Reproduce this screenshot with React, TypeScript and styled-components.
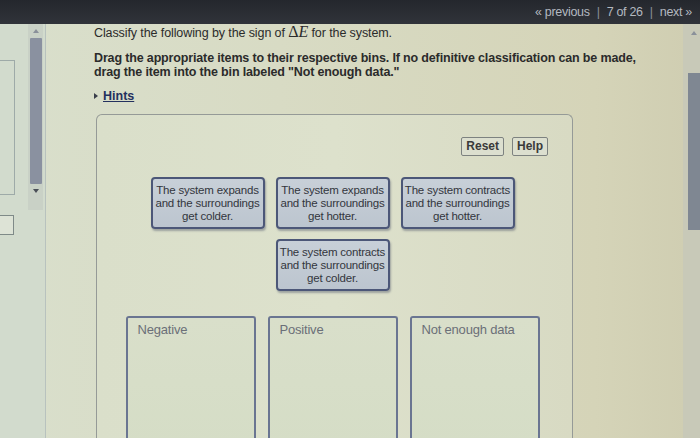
import React from 'react';
import styled, { createGlobalStyle } from 'styled-components';

const Global = createGlobalStyle`
  html, body {
    margin: 0;
    padding: 0;
    width: 700px;
    height: 438px;
    overflow: hidden;
    background: #d6d8bf;
    font-family: "Liberation Sans", Arial, sans-serif;
  }
`;

const Page = styled.div`
  width: 700px;
  height: 438px;
  display: flex;
  flex-direction: column;
  overflow: hidden;
`;

const TopBar = styled.div`
  height: 24px;
  flex: none;
  background: linear-gradient(#24272d, #30333a);
  display: flex;
  align-items: center;
  justify-content: flex-end;
  padding-right: 8px;
  color: #b4b9c0;
  font-size: 12.5px;
  letter-spacing: -0.3px;
`;

const Sep = styled.span`
  margin: 0 7px;
  color: #8a8f96;
`;

const Body = styled.div`
  flex: 1;
  display: grid;
  grid-template-columns: 46px 1fr 17px;
  min-height: 0;
  background: linear-gradient(90deg, #d9dfcc 0%, #d8dbc4 40%, #d5d4b8 85%, #cfcdb1 100%);
`;

const Sidebar = styled.div`
  display: flex;
  border-right: 1px solid #b8c2be;
  background: #d2dbcd;
`;

const SideBoxes = styled.div`
  width: 28px;
  display: flex;
  flex-direction: column;
  padding-top: 36px;
`;

const SideBox = styled.div`
  width: 15px;
  height: 135px;
  border: 1px solid #9eaaa8;
  border-left: none;
  box-sizing: border-box;
`;

const SideField = styled.div`
  margin-top: 20px;
  width: 14px;
  height: 20px;
  border: 1px solid #7f8a88;
  border-left: none;
  box-sizing: border-box;
  background: #dde3d6;
`;

const SideTrack = styled.div`
  width: 15px;
  display: flex;
  flex-direction: column;
  align-items: center;
  background: #c9d1c6;
  height: 186px;
  padding-top: 2px;
  box-sizing: border-box;
`;

const Arrow = styled.div<{ $down?: boolean }>`
  width: 0;
  height: 0;
  border-left: 3px solid transparent;
  border-right: 3px solid transparent;
  ${(p) => (p.$down ? 'border-top: 4px solid #4a4f58;' : 'border-bottom: 4px solid #8a909a;')}
  margin: 3px 0;
`;

const Thumb = styled.div<{ $h: number }>`
  width: 12px;
  height: ${(p) => p.$h}px;
  background: #8a91a0;
  border-radius: 1px;
  margin: 2px 0;
`;

const Content = styled.div`
  padding: 0 0 0 48px;
  color: #2b2b2b;
  min-width: 0;
`;

const Title = styled.p`
  margin: 0;
  font-size: 12.5px;
  line-height: 16px;
  letter-spacing: -0.1px;
`;

const Math = styled.span`
  font-family: "Liberation Serif", "Times New Roman", serif;
  font-size: 16px;
  i {
    font-style: italic;
  }
`;

const Instructions = styled.p`
  margin: 10px 0 0;
  font-size: 12.5px;
  font-weight: bold;
  line-height: 14px;
  letter-spacing: -0.15px;
`;

const Hints = styled.div`
  margin-top: 10px;
  display: flex;
  align-items: center;
  gap: 5px;
  font-size: 12.5px;
  font-weight: bold;
  color: #23305e;
  a {
    color: inherit;
    text-decoration: underline;
  }
`;

const Caret = styled.span`
  width: 0;
  height: 0;
  border-top: 3.5px solid transparent;
  border-bottom: 3.5px solid transparent;
  border-left: 4px solid #3a3f4a;
`;

const Panel = styled.div`
  margin-top: 11px;
  margin-left: 2px;
  width: 477px;
  height: 330px;
  box-sizing: border-box;
  border: 1px solid #959a97;
  border-bottom: none;
  border-radius: 6px 6px 0 0;
  background: linear-gradient(90deg, #dadfca, #dde1cc 50%, #d8dac3);
  padding: 22px 24px 0 28px;
`;

const Toolbar = styled.div`
  display: flex;
  justify-content: flex-end;
  gap: 8px;
`;

const Button = styled.button`
  font-family: "Liberation Sans", Arial, sans-serif;
  font-size: 12px;
  font-weight: bold;
  color: #3a3a3a;
  background: #dcdfcf;
  border: 1px solid #7d8280;
  border-radius: 2px;
  padding: 1px 4px;
  height: 19px;
  line-height: 15px;
`;

const Items = styled.div`
  margin-top: 21px;
  display: flex;
  flex-wrap: wrap;
  justify-content: center;
  gap: 10px 11px;
  width: 384px;
  margin-left: auto;
  margin-right: auto;
  position: relative;
  left: -4px;
`;

const Card = styled.div`
  width: 114px;
  height: 52px;
  box-sizing: border-box;
  border: 2px solid #4c5778;
  border-radius: 4px;
  background: linear-gradient(#c8d0d8, #bcc5cf);
  box-shadow: 1px 2px 2px rgba(40, 50, 80, 0.35);
  display: flex;
  align-items: center;
  justify-content: center;
  text-align: center;
  font-size: 11.5px;
  line-height: 13px;
  letter-spacing: -0.2px;
  color: #33363d;
  padding: 0 2px;
`;

const Bins = styled.div`
  margin-top: 25px;
  display: flex;
  justify-content: center;
  gap: 12px;
  position: relative;
  left: -4px;
`;

const Bin = styled.div`
  width: 130px;
  height: 130px;
  box-sizing: border-box;
  border: 2px solid #6a7591;
  border-bottom: none;
  border-radius: 3px 3px 0 0;
  background: linear-gradient(#d9dfca, #d5ddc6);
  padding: 4px 10px;
  font-size: 13px;
  color: #6b6f78;
  letter-spacing: -0.2px;
`;

const RightBar = styled.div`
  background: #c8c9b8;
  display: flex;
  flex-direction: column;
  align-items: flex-end;
  padding-top: 4px;
`;

const RightArrowBox = styled.div`
  width: 13px;
  display: flex;
  justify-content: center;
`;

const RightThumb = styled.div`
  width: 12px;
  height: 157px;
  margin-top: 35px;
  background: #7f8792;
`;

const items = [
  'The system expands and the surroundings get colder.',
  'The system expands and the surroundings get hotter.',
  'The system contracts and the surroundings get hotter.',
  'The system contracts and the surroundings get colder.',
];

const bins = ['Negative', 'Positive', 'Not enough data'];

export default function App() {
  return (
    <Page>
      <Global />
      <TopBar>
        <span>« previous</span>
        <Sep>|</Sep>
        <span>7 of 26</span>
        <Sep>|</Sep>
        <span>next »</span>
      </TopBar>
      <Body>
        <Sidebar>
          <SideBoxes>
            <SideBox />
            <SideField />
          </SideBoxes>
          <SideTrack>
            <Arrow />
            <Thumb $h={146} />
            <Arrow $down />
          </SideTrack>
        </Sidebar>
        <Content>
          <Title>
            Classify the following by the sign of{' '}
            <Math>
              Δ<i>E</i>
            </Math>{' '}
            for the system.
          </Title>
          <Instructions>
            Drag the appropriate items to their respective bins. If no definitive classification can be made,
            <br />
            drag the item into the bin labeled "Not enough data."
          </Instructions>
          <Hints>
            <Caret />
            <a>Hints</a>
          </Hints>
          <Panel>
            <Toolbar>
              <Button>Reset</Button>
              <Button>Help</Button>
            </Toolbar>
            <Items>
              {items.map((t) => (
                <Card key={t}>{t}</Card>
              ))}
            </Items>
            <Bins>
              {bins.map((b) => (
                <Bin key={b}>{b}</Bin>
              ))}
            </Bins>
          </Panel>
        </Content>
        <RightBar>
          <RightArrowBox>
            <Arrow />
          </RightArrowBox>
          <RightThumb />
        </RightBar>
      </Body>
    </Page>
  );
}
